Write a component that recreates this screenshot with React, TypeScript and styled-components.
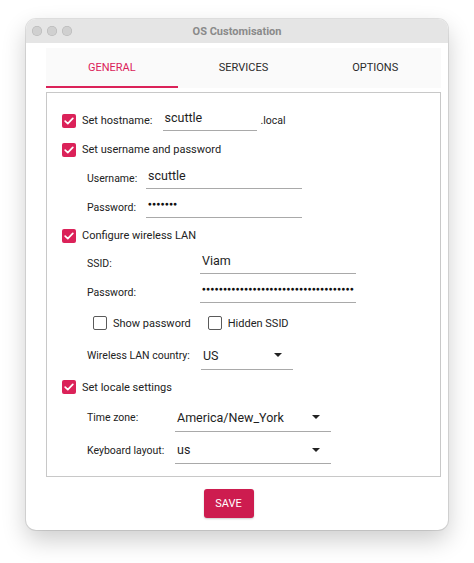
import React from 'react';
import styled, { createGlobalStyle } from 'styled-components';

const pink = '#db2259';

const GlobalStyle = createGlobalStyle`
  html, body {
    margin: 0;
    padding: 0;
    background: #ffffff;
  }
  body {
    font-family: Roboto, 'Liberation Sans', Arial, sans-serif;
    color: #222;
  }
`;

const Page = styled.div`
  width: 474px;
  height: 563px;
  padding: 19px 0 0 26px;
  box-sizing: border-box;
`;

const Window = styled.div`
  width: 422px;
  height: 511px;
  background: #ffffff;
  border-radius: 10px;
  overflow: hidden;
  box-shadow: 0 0 0 1px rgba(0, 0, 0, 0.1), 0 10px 24px rgba(0, 0, 0, 0.2);
  display: flex;
  flex-direction: column;
`;

const TitleBar = styled.div`
  height: 24px;
  flex: none;
  background: #e5e5e5;
  display: grid;
  grid-template-columns: 1fr auto 1fr;
  align-items: center;
  padding: 0 6px;
`;

const Lights = styled.div`
  display: flex;
  gap: 5px;
`;

const Light = styled.span`
  width: 10px;
  height: 10px;
  border-radius: 50%;
  background: #d0d0d0;
  box-shadow: inset 0 0 0 0.5px rgba(0, 0, 0, 0.15);
`;

const Title = styled.div`
  font-size: 11px;
  font-weight: 700;
  color: #8a8a8a;
`;

const Body = styled.div`
  flex: 1;
  display: flex;
  flex-direction: column;
  padding: 5px 7px 0 20px;
`;

const TabBar = styled.div`
  height: 40px;
  flex: none;
  display: grid;
  grid-template-columns: repeat(3, 1fr);
  background: #fafafa;
`;

const Tab = styled.div<{ $active?: boolean }>`
  display: flex;
  align-items: center;
  justify-content: center;
  font-size: 11px;
  color: ${({ $active }) => ($active ? pink : '#2a2a2a')};
  border-bottom: 2px solid ${({ $active }) => ($active ? pink : 'transparent')};
`;

const Panel = styled.div`
  margin-top: 4px;
  height: 385px;
  box-sizing: border-box;
  border: 1px solid #c8c8c8;
  padding: 13px 0 0 15px;
  display: flex;
  flex-direction: column;
`;

const Row = styled.div<{ $h: number; $indent?: number }>`
  height: ${({ $h }) => $h}px;
  flex: none;
  display: flex;
  align-items: center;
  padding-left: ${({ $indent }) => $indent ?? 0}px;
`;

const Box = styled.span<{ $checked?: boolean }>`
  width: 14px;
  height: 14px;
  flex: none;
  box-sizing: border-box;
  border-radius: 2px;
  background: ${({ $checked }) => ($checked ? pink : '#fff')};
  border: ${({ $checked }) => ($checked ? 'none' : '1.5px solid #5a5a5a')};
  display: flex;
  align-items: center;
  justify-content: center;
`;

const CheckText = styled.span`
  margin-left: 6px;
  font-size: 11px;
  color: #222;
`;

const Label = styled.span<{ $w?: number }>`
  width: ${({ $w }) => ($w ? `${$w}px` : 'auto')};
  flex: none;
  font-size: 10.5px;
  color: #222;
`;

// text inputs sit a little above the label line, combo boxes drop lower
const Field = styled.div<{ $w: number; $gap?: number; $select?: boolean }>`
  width: ${({ $w }) => $w}px;
  margin-left: ${({ $gap }) => $gap ?? 0}px;
  height: ${({ $select }) => ($select ? 24 : 22)}px;
  margin-top: ${({ $select }) => ($select ? 4 : -2)}px;
  box-sizing: border-box;
  border-bottom: 1px solid #a9a9a9;
  display: flex;
  align-items: center;
  justify-content: space-between;
  padding: 0 2px 4px 2px;
  font-size: 12.5px;
  color: #1e1e1e;
  overflow: hidden;
`;

const Dots = styled.span`
  font-size: 6.5px;
  letter-spacing: 0.3px;
  color: #111;
  white-space: nowrap;
`;

const Suffix = styled.span`
  margin-left: 4px;
  font-size: 10.5px;
  color: #222;
`;

const Arrow = styled.span`
  width: 0;
  height: 0;
  margin-right: 9px;
  border-left: 4px solid transparent;
  border-right: 4px solid transparent;
  border-top: 4px solid #222;
`;

const Spacer = styled.span<{ $w: number }>`
  width: ${({ $w }) => $w}px;
  flex: none;
`;

const Footer = styled.div`
  flex: 1;
  display: flex;
  justify-content: center;
  padding: 12px 30px 0 0;
`;

const SaveButton = styled.button`
  width: 50px;
  height: 29px;
  border: none;
  border-radius: 3px;
  background: #cd1c4f;
  color: #fff;
  font-family: Roboto, 'Liberation Sans', Arial, sans-serif;
  font-size: 11px;
  font-weight: 400;
  box-shadow: 0 1px 2px rgba(0, 0, 0, 0.2);
  padding: 0;
`;

const Check = ({ checked }: { checked?: boolean }) => (
  <Box $checked={checked}>
    {checked && (
      <svg width="10" height="8" viewBox="0 0 10 8">
        <path
          d="M1.2 4.2 L3.8 6.6 L8.8 1.4"
          fill="none"
          stroke="#fff"
          strokeWidth="1.7"
          strokeLinecap="round"
          strokeLinejoin="round"
        />
      </svg>
    )}
  </Box>
);

const App = () => (
  <>
    <GlobalStyle />
    <Page>
      <Window>
        <TitleBar>
          <Lights>
            <Light />
            <Light />
            <Light />
          </Lights>
          <Title>OS Customisation</Title>
          <span />
        </TitleBar>
        <Body>
          <TabBar>
            <Tab $active>GENERAL</Tab>
            <Tab>SERVICES</Tab>
            <Tab>OPTIONS</Tab>
          </TabBar>
          <Panel>
            <Row $h={29}>
              <Check checked />
              <CheckText>Set hostname:</CheckText>
              <Field $w={94} $gap={10}>scuttle</Field>
              <Suffix>.local</Suffix>
            </Row>
            <Row $h={29}>
              <Check checked />
              <CheckText>Set username and password</CheckText>
            </Row>
            <Row $h={29} $indent={25}>
              <Label $w={59}>Username:</Label>
              <Field $w={156}>scuttle</Field>
            </Row>
            <Row $h={29} $indent={25}>
              <Label $w={59}>Password:</Label>
              <Field $w={156}>
                <Dots>{'●'.repeat(7)}</Dots>
              </Field>
            </Row>
            <Row $h={27}>
              <Check checked />
              <CheckText>Configure wireless LAN</CheckText>
            </Row>
            <Row $h={29} $indent={25}>
              <Label $w={113}>SSID:</Label>
              <Field $w={156}>Viam</Field>
            </Row>
            <Row $h={29} $indent={25}>
              <Label $w={113}>Password:</Label>
              <Field $w={156}>
                <Dots>{'●'.repeat(36)}</Dots>
              </Field>
            </Row>
            <Row $h={32} $indent={31}>
              <Check />
              <CheckText>Show password</CheckText>
              <Spacer $w={17} />
              <Check />
              <CheckText>Hidden SSID</CheckText>
            </Row>
            <Row $h={33} $indent={25}>
              <Label $w={114}>Wireless LAN country:</Label>
              <Field $w={92} $select>
                US
                <Arrow />
              </Field>
            </Row>
            <Row $h={30}>
              <Check checked />
              <CheckText>Set locale settings</CheckText>
            </Row>
            <Row $h={31} $indent={25}>
              <Label $w={88}>Time zone:</Label>
              <Field $w={156} $select>
                America/New_York
                <Arrow />
              </Field>
            </Row>
            <Row $h={34} $indent={25}>
              <Label $w={88}>Keyboard layout:</Label>
              <Field $w={156} $select>
                us
                <Arrow />
              </Field>
            </Row>
          </Panel>
          <Footer>
            <SaveButton>SAVE</SaveButton>
          </Footer>
        </Body>
      </Window>
    </Page>
  </>
);

export default App;
